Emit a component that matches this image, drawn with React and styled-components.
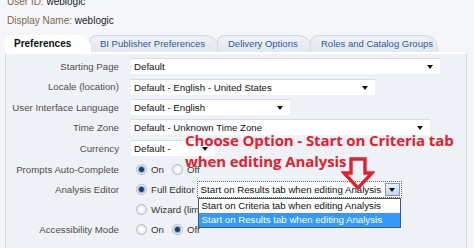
import styled, { createGlobalStyle } from "styled-components";

const GlobalStyle = createGlobalStyle`
    html, body {
        margin: 0;
        padding: 0;
        background: #f4f6f9;
        font-family: "Liberation Sans", Arial, sans-serif;
        overflow: hidden;
    }
`;

export default function App() {
    return (
        <>
            <GlobalStyle />
            <Page>
                <Header>
                    <InfoLine>
                        User ID: <b>weblogic</b>
                    </InfoLine>
                    <InfoLine>
                        Display Name: <b>weblogic</b>
                    </InfoLine>
                </Header>
                <TabStrip>
                    <Tab $active $width={86}>Preferences</Tab>
                    <Tab $width={130}>BI Publisher Preferences</Tab>
                    <Tab $width={95}>Delivery Options</Tab>
                    <Tab $width={128}>Roles and Catalog Groups</Tab>
                </TabStrip>
                <Panel>
                    <Form>
                        <Label>Starting Page</Label>
                        <Select $width={309}>Default</Select>

                        <Label>Locale (location)</Label>
                        <Select $width={244}>Default - English - United States</Select>

                        <Label>User Interface Language</Label>
                        <Select $width={159}>Default - English</Select>

                        <Label>Time Zone</Label>
                        <Select $width={299}>Default - Unknown Time Zone</Select>

                        <Label>Currency</Label>
                        <Select $width={84}>Default -</Select>

                        <Label>Prompts Auto-Complete</Label>
                        <Radios>
                            <Radio $checked />
                            <RadioText>On</RadioText>
                            <Radio />
                            <RadioText>Off</RadioText>
                        </Radios>

                        <Label>Analysis Editor</Label>
                        <Radios>
                            <Radio $checked />
                            <RadioText>Full Editor</RadioText>
                            <Combo>
                                <ComboValue>Start on Results tab when editing Analysis</ComboValue>
                                <ComboButton>
                                    <Caret />
                                </ComboButton>
                                <ComboList>
                                    <Option>Start on Criteria tab when editing Analysis</Option>
                                    <Option $selected>Start on Results tab when editing Analysis</Option>
                                </ComboList>
                            </Combo>
                        </Radios>

                        <Label />
                        <Radios>
                            <Radio />
                            <RadioText>Wizard (limited functionality)</RadioText>
                        </Radios>

                        <Label>Accessibility Mode</Label>
                        <Radios>
                            <Radio />
                            <RadioText>On</RadioText>
                            <Radio $checked />
                            <RadioText>Off</RadioText>
                        </Radios>
                    </Form>
                    <Note>
                        Choose Option - Start on Criteria tab
                        <br />
                        when editing Analysis
                    </Note>
                    <Arrow viewBox="0 0 34 34">
                        <path
                            d="M10 2 H24 V16 H31 L17 31 L3 16 H10 Z"
                            fill="none"
                            stroke="#e3202b"
                            strokeWidth="3.4"
                            strokeLinejoin="miter"
                        />
                    </Arrow>
                </Panel>
            </Page>
        </>
    );
}

const Page = styled.div`
    width: 474px;
    height: 248px;
    overflow: hidden;
`;

const Header = styled.div`
    margin-top: -5px;
    padding-left: 7px;
    display: flex;
    flex-direction: column;
    gap: 6px;
`;

const InfoLine = styled.div`
    font-size: 10px;
    line-height: 13px;
    color: #7a6a4f;
    b {
        font-weight: normal;
        color: #222;
    }
`;

const TabStrip = styled.div`
    display: flex;
    margin-top: 7px;
    padding-left: 5px;
    height: 18px;
    align-items: flex-end;
`;

const Tab = styled.div`
    width: ${(p) => p.$width}px;
    height: 17px;
    box-sizing: border-box;
    padding-left: ${(p) => (p.$active ? 8 : 10)}px;
    font-size: ${(p) => (p.$active ? 10 : 9.5)}px;
    line-height: 16px;
    white-space: nowrap;
    color: ${(p) => (p.$active ? "#111" : "#2c5a9c")};
    font-weight: ${(p) => (p.$active ? "bold" : "normal")};
    background: ${(p) => (p.$active ? "#ffffff" : "linear-gradient(#eef2f6, #e1e7ee)")};
    border: 1px solid ${(p) => (p.$active ? "#ffffff" : "#d3dae3")};
    border-bottom: none;
    border-radius: 8px 14px 0 0;
    margin-right: -2px;
    position: relative;
    z-index: ${(p) => (p.$active ? 1 : 0)};
`;

const Panel = styled.div`
    position: relative;
    margin-left: 5px;
    width: 462px;
    height: 200px;
    box-sizing: border-box;
    background: #eef1f5;
    border: 1px solid #d6dbe2;
    border-top: 2px solid #ffffff;
    padding: 2px 0 0 0;
`;

const Form = styled.div`
    display: grid;
    grid-template-columns: 113px 1fr;
    grid-template-rows: 20px 21px 20px 20px 22px 21px 19px 20px 20px;
    column-gap: 12px;
    align-items: center;
`;

const Label = styled.div`
    font-size: 9.7px;
    color: #4e4e4e;
    text-align: right;
    white-space: nowrap;
`;

const Select = styled.div`
    position: relative;
    width: ${(p) => p.$width}px;
    height: 16px;
    box-sizing: border-box;
    background: #fff;
    border-top: 1px solid #d9dde3;
    padding-left: 3px;
    font-size: 9.7px;
    line-height: 15px;
    color: #111;
    white-space: nowrap;
    overflow: hidden;
    &::after {
        content: "";
        position: absolute;
        right: 7px;
        top: 6px;
        border-left: 3px solid transparent;
        border-right: 3px solid transparent;
        border-top: 4px solid #111;
    }
`;

const Radios = styled.div`
    display: flex;
    align-items: center;
    height: 19px;
    padding-left: 5px;
`;

const Radio = styled.span`
    width: 11px;
    height: 11px;
    border-radius: 50%;
    box-sizing: border-box;
    border: 1px solid #b5bcc6;
    background: ${(p) =>
        p.$checked
            ? "radial-gradient(circle, #1f3d6e 0 2px, #6f96c4 2.8px, #e6edf5 4px)"
            : "radial-gradient(circle, #ffffff 0 1px, #dfe4ea 5px)"};
    margin-right: 4px;
    flex-shrink: 0;
`;

const RadioText = styled.span`
    font-size: 9.7px;
    color: #333;
    margin-right: 8px;
    white-space: nowrap;
`;

const Combo = styled.div`
    position: relative;
    width: 205px;
    height: 17px;
    box-sizing: border-box;
    margin-left: -6px;
    background: #fff;
    border: 1px dotted #55606e;
    display: flex;
    align-items: center;
    z-index: 2;
`;

const ComboValue = styled.div`
    flex: 1;
    padding-left: 3px;
    font-size: 9.7px;
    color: #111;
    white-space: nowrap;
    overflow: hidden;
`;

const ComboButton = styled.div`
    width: 15px;
    height: 13px;
    margin-right: 1px;
    border: 1px solid #7d9ab8;
    box-sizing: border-box;
    background: linear-gradient(#e8f1fb, #c4d8ee);
    display: flex;
    align-items: center;
    justify-content: center;
`;

const Caret = styled.span`
    border-left: 3px solid transparent;
    border-right: 3px solid transparent;
    border-top: 4px solid #111;
`;

const ComboList = styled.div`
    position: absolute;
    left: 0;
    top: 16px;
    width: 203px;
    box-sizing: border-box;
    border: 1px solid #4a5566;
    background: #fff;
`;

const Option = styled.div`
    height: 14px;
    line-height: 14px;
    padding-left: 3px;
    font-size: 9.7px;
    white-space: nowrap;
    color: ${(p) => (p.$selected ? "#fff" : "#111")};
    background: ${(p) => (p.$selected ? "#3399ff" : "#fff")};
`;

const Note = styled.div`
    position: absolute;
    left: 179px;
    top: 76px;
    font-family: "Open Sans", "DejaVu Sans", sans-serif;
    font-weight: bold;
    font-size: 15px;
    line-height: 21px;
    color: #e3202b;
    white-space: nowrap;
    letter-spacing: -0.1px;
`;

const Arrow = styled.svg`
    position: absolute;
    left: 335px;
    top: 103px;
    width: 34px;
    height: 34px;
    z-index: 3;
`;
